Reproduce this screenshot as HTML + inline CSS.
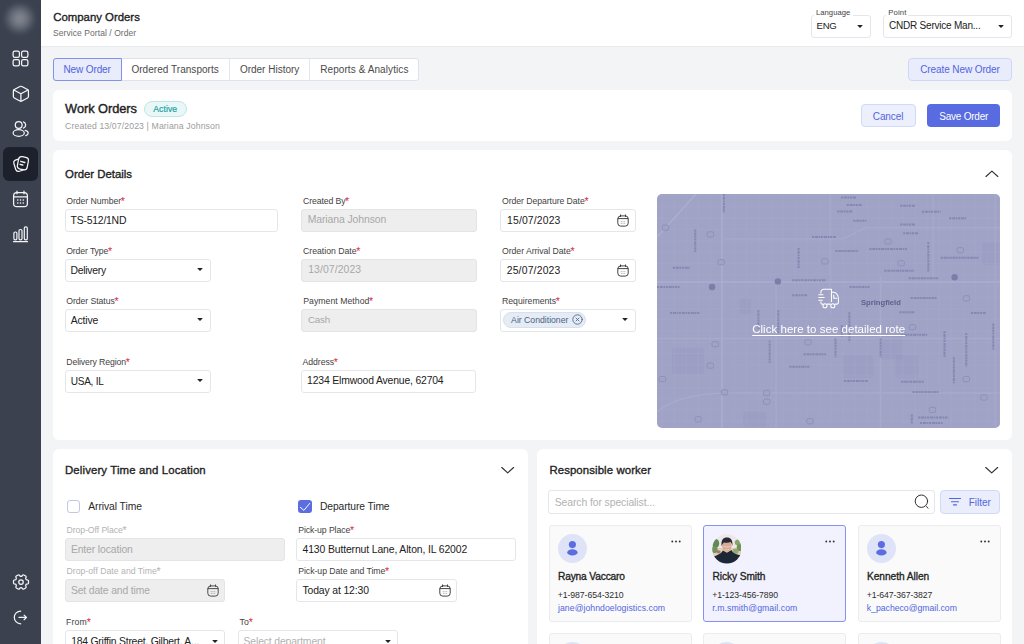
<!DOCTYPE html>
<html lang="en">
<head>
<meta charset="utf-8">
<title>Company Orders</title>
<style>
*{box-sizing:border-box;margin:0;padding:0}
html,body{width:1024px;height:644px;overflow:hidden;background:#f3f4f6;font-family:"Liberation Sans",sans-serif;color:#212121}
.abs,.t,.inp,.card{position:absolute}
.t{white-space:nowrap;line-height:1}
#side{position:absolute;left:0;top:0;width:41px;height:644px;background:#3b414e}
#side svg{position:absolute;overflow:visible}
#top{position:absolute;left:41px;top:0;width:983px;height:46px;background:#fff;box-shadow:0 0 1.5px rgba(60,70,110,.18)}
.card{background:#fff;border-radius:6px}
.inp{height:23px;border:1px solid #e5e6ea;border-radius:3px;background:#fff;font-size:10.4px;line-height:21px;padding-left:5.5px;white-space:nowrap;color:#1f1f1f;overflow:hidden}
.caret{position:absolute;width:0;height:0;border-left:3.3px solid transparent;border-right:3.3px solid transparent;border-top:3.7px solid #222;border-radius:1px}
</style>
</head>
<body>
<div id="side">
<div class="abs" style="left:0px;top:0px;width:40px;height:40px;background:radial-gradient(circle at 19.6px 18.6px,#7f848f 0,#787d88 4px,#686d79 8px,#555b68 11.5px,#464c5a 14.5px,#3e4451 17px,#3b414e 19.5px)"></div>
<div class="abs" style="left:3px;top:146.5px;width:35px;height:34px;border-radius:6px;background:#1d212b"></div>
<svg style="left:12.2px;top:50.2px" width="17" height="17" viewBox="0 0 17 17" fill="none" stroke="#f4f5f7" stroke-width="1.25"><rect x="1.1" y="1.1" width="6.3" height="6.3" rx="1.7"/><rect x="9.6" y="1.1" width="6.3" height="6.3" rx="1.7"/><rect x="1.1" y="9.6" width="6.3" height="6.3" rx="1.7"/><rect x="9.6" y="9.6" width="6.3" height="6.3" rx="1.7"/></svg>
<svg style="left:11.8px;top:85.3px" width="17.8" height="17.3" viewBox="0 0 17 18" preserveAspectRatio="none" fill="none" stroke="#f4f5f7" stroke-width="1.2" stroke-linejoin="round" stroke-linecap="round"><path d="M7.6 1.6 2.2 4.7a1.8 1.8 0 0 0-.9 1.5v5.800000000000001a1.8 1.8 0 0 0 .9 1.5l5.4 3.1a1.8 1.8 0 0 0 1.8 0l5.4-3.1a1.8 1.8 0 0 0 .9-1.5V6.2a1.8 1.8 0 0 0-.9-1.5L9.4 1.6a1.8 1.8 0 0 0-1.8 0Z"/><path d="M1.7 5.3 8.5 9.2l6.8-3.9M8.5 9.2v7.6"/></svg>
<svg style="left:12px;top:119.5px" width="18" height="18" viewBox="0 0 18 18" fill="none" stroke="#f4f5f7" stroke-width="1.25" stroke-linecap="round"><circle cx="6.7" cy="5" r="3.4"/><ellipse cx="6.7" cy="13" rx="5.6" ry="3.3"/><path d="M11.5 1.9a3.3 3.3 0 0 1 0 6.2M13.2 10.3c1.8.4 3 1.400000000000001 3 2.7s-1 2.200000000000001-2.400000000000001 2.700000000000001"/></svg>
<svg style="left:12px;top:155px" width="18" height="18" viewBox="0 0 18 18" fill="none" stroke="#f4f5f7" stroke-width="1.25" stroke-linecap="round" stroke-linejoin="round"><rect x="-4.7" y="-5.9" width="9.4" height="11.8" rx="3" transform="translate(7.3 10.1) rotate(-17)"/><rect x="-5" y="-6.3" width="10" height="12.6" rx="3.3" transform="translate(10.9 8.2) rotate(11)" fill="#1d212b"/><path d="M8.7 6.3l4.1 1.2M8.1 9.3l2.7.7" stroke-width="1.35"/></svg>
<svg style="left:12px;top:190px" width="17" height="18" viewBox="0 0 17 18" fill="none" stroke="#f4f5f7" stroke-width="1.25" stroke-linecap="round"><rect x="1.6" y="2.6" width="13.8" height="14" rx="3.2"/><path d="M1.8 6.8h13.4M5 1.2v2.6M12 1.2v2.6"/><g stroke-width="1.5"><path d="M5.7 10h.1M8.45 10h.1M11.2 10h.1M5.7 13h.1M8.45 13h.1M11.2 13h.1"/></g></svg>
<svg style="left:12px;top:225px" width="17" height="18" viewBox="0 0 17 18" fill="none" stroke="#f4f5f7" stroke-width="1.2" stroke-linecap="round"><rect x="1.9" y="7" width="3" height="7.8" rx="1.3"/><rect x="7" y="4.5" width="3" height="10.3" rx="1.3"/><rect x="12.3" y="1.9" width="3" height="12.9" rx="1.3"/><path d="M1.5 16.7h14"/></svg>
<svg style="left:10.7px;top:572.3px" width="20" height="20" viewBox="0 0 24 24" fill="none" stroke="#f4f5f7" stroke-width="1.5" stroke-linejoin="round"><g transform="rotate(90 12 12)"><path d="M9.594 3.94c.09-.542.56-.94 1.11-.94h2.593c.55 0 1.02.398 1.11.94l.213 1.281c.063.374.313.686.645.87.074.04.147.083.22.127.324.196.72.257 1.075.124l1.217-.456a1.125 1.125 0 0 1 1.37.49l1.296 2.247a1.125 1.125 0 0 1-.26 1.431l-1.003.827c-.293.24-.438.613-.431.992a6.759 6.759 0 0 1 0 .255c-.007.378.138.75.43.99l1.005.828c.424.35.534.954.26 1.43l-1.298 2.247a1.125 1.125 0 0 1-1.369.491l-1.217-.456c-.355-.133-.75-.072-1.076.124a6.57 6.57 0 0 1-.22.128c-.331.183-.581.495-.644.869l-.213 1.28c-.09.543-.56.941-1.11.941h-2.594c-.55 0-1.02-.398-1.11-.94l-.213-1.281c-.062-.374-.312-.686-.644-.87a6.52 6.52 0 0 1-.22-.127c-.325-.196-.72-.257-1.076-.124l-1.217.456a1.125 1.125 0 0 1-1.369-.49l-1.297-2.247a1.125 1.125 0 0 1 .26-1.431l1.004-.827c.292-.24.437-.613.43-.992a6.932 6.932 0 0 1 0-.255c.007-.378-.138-.75-.43-.99l-1.004-.828a1.125 1.125 0 0 1-.26-1.43l1.297-2.247a1.125 1.125 0 0 1 1.37-.491l1.216.456c.356.133.751.072 1.076-.124.072-.044.146-.087.22-.128.332-.183.582-.495.644-.869l.214-1.281z"/></g><circle cx="12" cy="12" r="2.7"/></svg>
<svg style="left:12px;top:609px" width="17" height="17" viewBox="0 0 17 17" fill="none" stroke="#f4f5f7" stroke-width="1.25" stroke-linecap="round" stroke-linejoin="round"><path d="M8.7 2a6.4 6.4 0 1 0 0 12.8"/><path d="M7 8.4h7.4M12.1 6.1l2.4 2.3-2.4 2.3"/></svg>
</div>
<div id="top"></div>
<span class="t" style="left:53.28px;top:7px;font-size:11.4px;line-height:20px;letter-spacing:-0.013px;-webkit-text-stroke:0.36px #1f1f1f;color:#1f1f1f;">Company Orders</span>
<span class="t" style="left:53.00px;top:23px;font-size:8.5px;line-height:20px;letter-spacing:0.070px;color:#6b6b6b;">Service Portal / Order</span>
<div class="inp" style="left:810.5px;top:14.5px;width:60.00px;height:23.00px;"></div>
<div class="abs" style="left:814px;top:12px;width:38.5px;height:5px;background:#fff"></div>
<span class="t" style="left:815.90px;top:3px;font-size:7.7px;line-height:20px;letter-spacing:0.034px;color:#444;">Language</span>
<span class="t" style="left:816.60px;top:16px;font-size:9.6px;line-height:20px;letter-spacing:-0.292px;">ENG</span>
<i class="caret" style="left:857.3px;top:24.6px;border-top-color:#222"></i>
<div class="inp" style="left:882.7px;top:14.5px;width:129.10px;height:23.00px;"></div>
<div class="abs" style="left:886px;top:12px;width:22px;height:5px;background:#fff"></div>
<span class="t" style="left:888.30px;top:3px;font-size:7.7px;line-height:20px;letter-spacing:0.111px;color:#444;">Point</span>
<span class="t" style="left:889.00px;top:16px;font-size:10px;line-height:20px;letter-spacing:-0.217px;">CNDR Service Man...</span>
<i class="caret" style="left:998.4px;top:24.6px;border-top-color:#222"></i>
<div class="abs" style="left:53px;top:58px;width:365.50px;height:23.20px;background:#fff;border:1px solid #dfe1ee;border-radius:3px"></div>
<div class="abs" style="left:229px;top:58.5px;width:1.00px;height:22.20px;background:#e3e5f0"></div>
<div class="abs" style="left:309px;top:58.5px;width:1.00px;height:22.20px;background:#e3e5f0"></div>
<div class="abs" style="left:53px;top:58px;width:68.70px;height:23.20px;background:#e9ecfb;border:1px solid #8391ea;border-radius:3px 0 0 3px"></div>
<span class="t" style="left:63.40px;top:60px;font-size:10px;line-height:20px;letter-spacing:-0.106px;color:#4f62dc;">New Order</span>
<span class="t" style="left:131.40px;top:60px;font-size:10px;line-height:20px;letter-spacing:0.041px;color:#4a4a4a;">Ordered Transports</span>
<span class="t" style="left:239.90px;top:60px;font-size:10px;line-height:20px;color:#4a4a4a;">Order History</span>
<span class="t" style="left:320.20px;top:60px;font-size:10px;line-height:20px;letter-spacing:0.083px;color:#4a4a4a;">Reports &amp; Analytics</span>
<div class="abs" style="left:908.3px;top:58px;width:103.70px;height:23.20px;background:#e9ecfb;border:1px solid #d0d6f7;border-radius:4px"></div>
<span class="t" style="left:920.20px;top:60px;font-size:10px;line-height:20px;letter-spacing:-0.097px;color:#5265df;">Create New Order</span>
<div class="card" style="left:53px;top:90.2px;width:959.00px;height:50.80px;"></div>
<span class="t" style="left:65.11px;top:99px;font-size:12.8px;line-height:20px;letter-spacing:-0.043px;-webkit-text-stroke:0.41px #1f1f1f;color:#1f1f1f;">Work Orders</span>
<div class="abs" style="left:144.3px;top:101.3px;width:42.40px;height:15.50px;background:#e9f7f7;border:1px solid #bfe6e6;border-radius:8px"></div>
<span class="t" style="left:153.20px;top:99px;font-size:8.6px;line-height:20px;letter-spacing:0.093px;color:#19a3a3;-webkit-text-stroke:.2px #19a3a3;">Active</span>
<span class="t" style="left:65.10px;top:116px;font-size:8.7px;line-height:20px;letter-spacing:0.121px;color:#9c9c9c;">Created 13/07/2023 | Mariana Johnson</span>
<div class="abs" style="left:861px;top:104.3px;width:54.70px;height:23.10px;background:#eceffc;border:1px solid #d2d8f8;border-radius:4px"></div>
<span class="t" style="left:872.80px;top:107px;font-size:10px;line-height:20px;letter-spacing:-0.110px;color:#5265df;">Cancel</span>
<div class="abs" style="left:927.3px;top:104.3px;width:73.00px;height:23.10px;background:#586be0;border-radius:4px"></div>
<span class="t" style="left:939.20px;top:107px;font-size:10px;line-height:20px;letter-spacing:-0.217px;color:#ffffff;">Save Order</span>
<div class="card" style="left:53px;top:150px;width:959.00px;height:290.00px;"></div>
<span class="t" style="left:65.08px;top:164px;font-size:11.4px;line-height:20px;letter-spacing:-0.009px;-webkit-text-stroke:0.36px #1f1f1f;color:#1f1f1f;">Order Details</span>
<svg class="abs" style="left:984.5px;top:168.5px" width="14" height="9" viewBox="0 0 14 9" fill="none" stroke="#2e3138" stroke-width="1.15" stroke-linecap="round" stroke-linejoin="round"><path d="M1 7.5l5.9-5.4 5.9 5.4"/></svg>
<span class="t" style="left:66.20px;top:191.00px;font-size:8.7px;line-height:20px;letter-spacing:-0.049px;color:#424242">Order Number<span style="color:#e3263e;font-size:1.22em;line-height:0;position:relative;top:.12em;margin-left:-.03em">*</span></span>
<div class="inp" style="left:64.5px;top:208.5px;width:213.30px;height:23.00px;"></div>
<span class="t" style="left:70.60px;top:211px;font-size:10.4px;line-height:20px;letter-spacing:-0.214px;">TS-512/1ND</span>
<span class="t" style="left:66.20px;top:241.00px;font-size:8.7px;line-height:20px;letter-spacing:-0.126px;color:#424242">Order Type<span style="color:#e3263e;font-size:1.22em;line-height:0;position:relative;top:.12em;margin-left:-.03em">*</span></span>
<div class="inp" style="left:64.5px;top:258.5px;width:146.00px;height:23.00px;"></div>
<span class="t" style="left:70.60px;top:261px;font-size:10.4px;line-height:20px;letter-spacing:-0.292px;">Delivery</span>
<i class="caret" style="left:197.2px;top:268.1px;border-top-color:#222"></i>
<span class="t" style="left:66.25px;top:291.00px;font-size:8.7px;line-height:20px;letter-spacing:-0.064px;color:#424242">Order Status<span style="color:#e3263e;font-size:1.22em;line-height:0;position:relative;top:.12em;margin-left:-.03em">*</span></span>
<div class="inp" style="left:64.5px;top:308.5px;width:146.00px;height:23.00px;"></div>
<span class="t" style="left:70.70px;top:311px;font-size:10.4px;line-height:20px;letter-spacing:-0.148px;">Active</span>
<i class="caret" style="left:197.2px;top:318.1px;border-top-color:#222"></i>
<span class="t" style="left:66.25px;top:352.00px;font-size:8.7px;line-height:20px;letter-spacing:-0.104px;color:#424242">Delivery Region<span style="color:#e3263e;font-size:1.22em;line-height:0;position:relative;top:.12em;margin-left:-.03em">*</span></span>
<div class="inp" style="left:64.5px;top:369.6px;width:146.00px;height:23.00px;"></div>
<span class="t" style="left:70.70px;top:372px;font-size:10.1px;line-height:20px;letter-spacing:-0.282px;">USA, IL</span>
<i class="caret" style="left:197.2px;top:379.2px;border-top-color:#222"></i>
<span class="t" style="left:303.00px;top:191.00px;font-size:8.7px;line-height:20px;letter-spacing:-0.109px;color:#424242">Created By<span style="color:#e3263e;font-size:1.22em;line-height:0;position:relative;top:.12em;margin-left:-.03em">*</span></span>
<div class="inp" style="left:301.3px;top:208.5px;width:175.70px;height:23.00px;background:#eeeeee;border-color:#e4e4e4;"></div>
<span class="t" style="left:307.70px;top:210px;font-size:10.4px;line-height:20px;letter-spacing:-0.083px;color:#a8a8a8;">Mariana Johnson</span>
<span class="t" style="left:303.00px;top:241.00px;font-size:8.7px;line-height:20px;letter-spacing:-0.006px;color:#424242">Creation Date<span style="color:#e3263e;font-size:1.22em;line-height:0;position:relative;top:.12em;margin-left:-.03em">*</span></span>
<div class="inp" style="left:301.3px;top:258.5px;width:175.70px;height:23.00px;background:#eeeeee;border-color:#e4e4e4;"></div>
<span class="t" style="left:308.20px;top:260px;font-size:10.4px;line-height:20px;letter-spacing:0.105px;color:#a8a8a8;">13/07/2023</span>
<span class="t" style="left:303.20px;top:291.00px;font-size:8.7px;line-height:20px;letter-spacing:0.038px;color:#424242">Payment Method<span style="color:#e3263e;font-size:1.22em;line-height:0;position:relative;top:.12em;margin-left:-.03em">*</span></span>
<div class="inp" style="left:301.3px;top:308.5px;width:175.70px;height:23.00px;background:#eeeeee;border-color:#e4e4e4;"></div>
<span class="t" style="left:307.90px;top:310px;font-size:9.9px;line-height:20px;letter-spacing:-0.272px;color:#a8a8a8;">Cash</span>
<span class="t" style="left:302.40px;top:352.00px;font-size:8.7px;line-height:20px;letter-spacing:-0.017px;color:#424242">Address<span style="color:#e3263e;font-size:1.22em;line-height:0;position:relative;top:.12em;margin-left:-.03em">*</span></span>
<div class="inp" style="left:300.5px;top:369.6px;width:175.30px;height:23.00px;"></div>
<span class="t" style="left:307.10px;top:371px;font-size:10.4px;line-height:20px;letter-spacing:-0.169px;">1234 Elmwood Avenue, 62704</span>
<span class="t" style="left:502.00px;top:191.00px;font-size:8.7px;line-height:20px;letter-spacing:-0.066px;color:#424242">Order Departure Date<span style="color:#e3263e;font-size:1.22em;line-height:0;position:relative;top:.12em;margin-left:-.03em">*</span></span>
<div class="inp" style="left:500.4px;top:208.5px;width:135.20px;height:23.00px;"></div>
<span class="t" style="left:507.10px;top:211px;font-size:10.4px;line-height:20px;letter-spacing:0.139px;">15/07/2023</span>
<svg class="abs" style="left:617.3px;top:213.6px" width="12" height="13" viewBox="0 0 12 13" fill="none" stroke="#3a3a3a" stroke-width=".95" stroke-linecap="round"><rect x=".8" y="1.9" width="10.4" height="10.2" rx="2.9"/><path d="M1 4.6h10M3.5 .9v1.5M8.5 .9v1.5"/><path stroke-width=".8" d="M4.2 7.6h.1M5.95 7.6h.1M7.7 7.6h.1M4.2 9.4h.1M5.95 9.4h.1M7.7 9.4h.1" opacity=".55"/></svg>
<span class="t" style="left:502.00px;top:241.00px;font-size:8.7px;line-height:20px;letter-spacing:-0.044px;color:#424242">Order Arrival Date<span style="color:#e3263e;font-size:1.22em;line-height:0;position:relative;top:.12em;margin-left:-.03em">*</span></span>
<div class="inp" style="left:500.4px;top:258.5px;width:135.20px;height:23.00px;"></div>
<span class="t" style="left:506.70px;top:261px;font-size:10.4px;line-height:20px;letter-spacing:0.183px;">25/07/2023</span>
<svg class="abs" style="left:617.3px;top:263.6px" width="12" height="13" viewBox="0 0 12 13" fill="none" stroke="#3a3a3a" stroke-width=".95" stroke-linecap="round"><rect x=".8" y="1.9" width="10.4" height="10.2" rx="2.9"/><path d="M1 4.6h10M3.5 .9v1.5M8.5 .9v1.5"/><path stroke-width=".8" d="M4.2 7.6h.1M5.95 7.6h.1M7.7 7.6h.1M4.2 9.4h.1M5.95 9.4h.1M7.7 9.4h.1" opacity=".55"/></svg>
<span class="t" style="left:502.00px;top:291.00px;font-size:8.7px;line-height:20px;letter-spacing:-0.004px;color:#424242">Requirements<span style="color:#e3263e;font-size:1.22em;line-height:0;position:relative;top:.12em;margin-left:-.03em">*</span></span>
<div class="inp" style="left:500.4px;top:308.5px;width:135.20px;height:23.00px;"></div>
<i class="caret" style="left:622.1px;top:318.1px;border-top-color:#222"></i>
<div class="abs" style="left:503px;top:311.5px;width:83.00px;height:16.50px;background:#e5ecf5;border:1px solid #d6e0ee;border-radius:8.5px"></div>
<span class="t" style="left:511.10px;top:310px;font-size:8.7px;line-height:20px;letter-spacing:-0.011px;color:#4a6283;">Air Conditioner</span>
<svg class="abs" style="left:572.3px;top:314.2px" width="11" height="11" viewBox="0 0 11 11" fill="none" stroke="#4a6283" stroke-width=".85" stroke-linecap="round"><circle cx="5.5" cy="5.5" r="4.7"/><path d="M4 4l3 3M7 4L4 7"/></svg>
<svg class="abs" style="left:657px;top:194px;border-radius:5px" width="343.0" height="234.0" viewBox="0 0 343.0 234.0"><defs><filter id="mb" x="-5%" y="-5%" width="110%" height="110%"><feGaussianBlur stdDeviation="0.65"/></filter></defs><rect width="343.0" height="234.0" fill="#a0a3c6"/><g filter="url(#mb)"><rect x="14.9" y="153.9" width="32.0" height="26.3" rx="3" fill="#979abf" opacity=".5"/><rect x="86.3" y="217.8" width="22.6" height="15.0" rx="3" fill="#979abf" opacity=".5"/><rect x="223.6" y="138.9" width="22.6" height="26.3" rx="3" fill="#979abf" opacity=".5"/><rect x="325.1" y="48.6" width="18.8" height="22.6" rx="3" fill="#979abf" opacity=".5"/><rect x="82.6" y="105.0" width="11.3" height="15.0" rx="3" fill="#979abf" opacity=".5"/><rect x="186.0" y="161.4" width="30.1" height="22.6" rx="3" fill="#979abf" opacity=".5"/><rect x="238.6" y="161.4" width="22.6" height="22.6" rx="3" fill="#979abf" opacity=".5"/><path d="M5.5 0V234.0M17.5 0V234.0M29.6 0V234.0M41.6 0V234.0M53.6 0V234.0M65.7 0V234.0M77.7 0V234.0M89.7 0V234.0M101.8 0V234.0M113.8 0V234.0M125.8 0V234.0M137.8 0V234.0M149.9 0V234.0M161.9 0V234.0M173.9 0V234.0M186.0 0V234.0M198.0 0V234.0M210.0 0V234.0M222.1 0V234.0M234.1 0V234.0M246.1 0V234.0M258.2 0V234.0M270.2 0V234.0M282.2 0V234.0M294.2 0V234.0M306.3 0V234.0M318.3 0V234.0M330.3 0V234.0M342.4 0V234.0M0 1.6H343.0M0 12.9H343.0M0 24.2H343.0M0 35.5H343.0M0 46.8H343.0M0 58.0H343.0M0 69.3H343.0M0 80.6H343.0M0 91.9H343.0M0 103.1H343.0M0 114.4H343.0M0 125.7H343.0M0 137.0H343.0M0 148.3H343.0M0 159.5H343.0M0 170.8H343.0M0 182.1H343.0M0 193.4H343.0M0 204.6H343.0M0 215.9H343.0M0 227.2H343.0" stroke="#a6a9ca" stroke-width=".6" fill="none" opacity=".8"/><path d="M64.9 0V234.0M0 88.1H343.0M0 43.0L39.4 -0.2" stroke="#abaecf" stroke-width="1.5" fill="none"/><path d="M173.2 0V120.1M64.9 44.9H186.0L208.5 33.6H343.0M0 217.8Q20.6 200.9 64.9 199.0H343.0M119.1 88.1V234.0M223.6 82.5V234.0M338.2 0V234.0M0 144.5H343.0M276.2 0V90.0" stroke="#a7aacb" stroke-width="1.3" fill="none"/><path d="M184.1 3.5h15.0M189.7 11.0h15.0M180.3 17.4h15.0M243.1 11.8h15.0M264.9 17.8h18.8M196.3 26.8h13.2M292.2 24.2h16.9M243.1 30.6h15.0M246.1 39.2h15.0M155.0 43.0h24.4M212.3 55.0h37.6M178.5 56.9h22.6M283.7 63.7h37.6M15.9 73.8h16.9M227.3 76.8h30.1M251.8 84.3h30.1M135.2 86.2h33.8M-0.1 93.0h22.6M192.5 93.0h20.7M135.2 101.3h15.0M253.6 103.9h26.3M13.0 118.9h30.1M242.4 118.2h15.0M313.8 118.9h15.0M244.2 140.7h26.3M146.5 160.3h22.6M132.4 172.7h20.7M186.9 187.0h24.4M244.2 187.7h22.6M255.5 197.9h26.3M261.2 223.4h30.1M263.0 229.1h22.6M66.8 -0.2v18.8M38.2 35.5v22.6M141.6 54.1v20.7M271.3 47.9v30.1M101.4 116.3v18.8M121.3 116.3v22.6M192.4 118.2v30.1M184.8 131.3v11.3M223.6 144.5v18.8M287.5 137.0v26.3M309.3 138.9v33.8M296.9 163.3v26.3M336.3 129.5v26.3M112.7 146.4v22.6M178.5 144.5v18.8M254.8 220.6v9.4" stroke="#7d80ab" stroke-width="2" stroke-dasharray="2.2 .8 3 .6 1.6 .7" fill="none" opacity=".78"/><rect x="50.1" y="37.8" width="6.4" height="5.2" rx="1.6" fill="#a0a3c6" stroke="#8b8eb6" stroke-width=".9"/><rect x="61.0" y="65.6" width="6.4" height="5.2" rx="1.6" fill="#a0a3c6" stroke="#8b8eb6" stroke-width=".9"/><rect x="164.7" y="64.8" width="6.4" height="5.2" rx="1.6" fill="#a0a3c6" stroke="#8b8eb6" stroke-width=".9"/><rect x="227.9" y="44.9" width="6.4" height="5.2" rx="1.6" fill="#a0a3c6" stroke="#8b8eb6" stroke-width=".9"/><rect x="241.0" y="66.7" width="6.4" height="5.2" rx="1.6" fill="#a0a3c6" stroke="#8b8eb6" stroke-width=".9"/><rect x="306.1" y="101.7" width="6.4" height="5.2" rx="1.6" fill="#a0a3c6" stroke="#8b8eb6" stroke-width=".9"/><rect x="300.1" y="53.6" width="6.4" height="5.2" rx="1.6" fill="#a0a3c6" stroke="#8b8eb6" stroke-width=".9"/><rect x="55.0" y="147.5" width="6.4" height="5.2" rx="1.6" fill="#a0a3c6" stroke="#8b8eb6" stroke-width=".9"/><rect x="50.1" y="169.0" width="6.4" height="5.2" rx="1.6" fill="#a0a3c6" stroke="#8b8eb6" stroke-width=".9"/><rect x="2.3" y="182.5" width="6.4" height="5.2" rx="1.6" fill="#a0a3c6" stroke="#8b8eb6" stroke-width=".9"/><rect x="64.3" y="195.7" width="6.4" height="5.2" rx="1.6" fill="#a0a3c6" stroke="#8b8eb6" stroke-width=".9"/><rect x="106.5" y="196.4" width="6.4" height="5.2" rx="1.6" fill="#a0a3c6" stroke="#8b8eb6" stroke-width=".9"/><rect x="106.5" y="205.1" width="6.4" height="5.2" rx="1.6" fill="#a0a3c6" stroke="#8b8eb6" stroke-width=".9"/><rect x="38.0" y="222.7" width="6.4" height="5.2" rx="1.6" fill="#a0a3c6" stroke="#8b8eb6" stroke-width=".9"/><rect x="147.8" y="145.7" width="6.4" height="5.2" rx="1.6" fill="#a0a3c6" stroke="#8b8eb6" stroke-width=".9"/><rect x="149.7" y="224.6" width="6.4" height="5.2" rx="1.6" fill="#a0a3c6" stroke="#8b8eb6" stroke-width=".9"/><rect x="323.7" y="200.9" width="6.4" height="5.2" rx="1.6" fill="#a0a3c6" stroke="#8b8eb6" stroke-width=".9"/><rect x="306.1" y="182.5" width="6.4" height="5.2" rx="1.6" fill="#a0a3c6" stroke="#8b8eb6" stroke-width=".9"/><rect x="272.2" y="213.3" width="6.4" height="5.2" rx="1.6" fill="#a0a3c6" stroke="#8b8eb6" stroke-width=".9"/><rect x="252.3" y="130.6" width="6.4" height="5.2" rx="1.6" fill="#a0a3c6" stroke="#8b8eb6" stroke-width=".9"/><rect x="5.3" y="31.0" width="6.4" height="5.2" rx="1.6" fill="#a0a3c6" stroke="#8b8eb6" stroke-width=".9"/><circle cx="55.1" cy="93.0" r="3.2" fill="#7b7eaa"/><circle cx="120.9" cy="87.4" r="3.2" fill="#7b7eaa"/><circle cx="297.6" cy="83.2" r="3.2" fill="#7b7eaa"/></g><text x="204.0" y="110.6" font-family="Liberation Sans, sans-serif" font-size="8" font-weight="bold" fill="#5e618c" textLength="39.8" lengthAdjust="spacingAndGlyphs" filter="url(#mb)">Springfield</text><g transform="translate(160.6 94.0)" fill="none" stroke="#fff" stroke-width="1.05" stroke-linecap="round" stroke-linejoin="round"><path d="M3.3 5.1V4a2.8 2.8 0 0 1 2.8-2.8h7.800000000000001v12.4"/><path d="M13.9 4.3h2.1c2.7 0 4.800000000000001 3.2 4.800000000000001 6.4v3.8c0 1-.6 1.6-1.4 1.6h-1.6"/><path d="M16.2 6.9v3.3h2.9"/><path d="M12.700000000000001 16.1H9.9M5 16.1H4.600000000000001c-.8 0-1.3-.6-1.3-1.4v-.9"/><circle cx="7.4" cy="17.7" r="2.05"/><circle cx="15.2" cy="17.7" r="2.05"/><path d="M1.2 6.8h4.2M1.2 9.5h5.4M1.2 12.2h3.6"/></g></svg>
<span class="t" style="left:752.20px;top:319px;font-size:11.5px;line-height:20px;letter-spacing:0.028px;color:#ffffff;text-decoration:underline;text-decoration-thickness:.6px;text-underline-offset:1.5px;">Click here to see detailed rote</span>
<div class="card" style="left:53px;top:449.3px;width:475.00px;height:210.70px;"></div>
<span class="t" style="left:64.98px;top:460px;font-size:11.4px;line-height:20px;letter-spacing:0.134px;-webkit-text-stroke:0.36px #1f1f1f;color:#1f1f1f;">Delivery Time and Location</span>
<svg class="abs" style="left:500.7px;top:465.8px" width="14" height="9" viewBox="0 0 14 9" fill="none" stroke="#2e3138" stroke-width="1.15" stroke-linecap="round" stroke-linejoin="round"><path d="M.8 1.5l5.9 5.4 5.9-5.4"/></svg>
<div class="abs" style="left:66.5px;top:499.5px;width:13.50px;height:13.50px;border:1px solid #c3c7df;border-radius:3px;background:#fff"></div>
<span class="t" style="left:88.20px;top:497px;font-size:10.3px;line-height:20px;letter-spacing:-0.053px;color:#2a2a2a;">Arrival Time</span>
<div class="abs" style="left:298.2px;top:499.5px;width:13.60px;height:13.50px;border-radius:3px;background:#5b6de1"><svg width="13.6" height="13.5" viewBox="0 0 13.6 13.5" fill="none" stroke="#fff" stroke-width="1" stroke-linecap="round" stroke-linejoin="round" style="display:block"><path d="M2.3 7.3l3.6 3.1 5.8-7"/></svg></div>
<span class="t" style="left:320.00px;top:497px;font-size:10.3px;line-height:20px;letter-spacing:-0.105px;color:#2a2a2a;">Departure Time</span>
<span class="t" style="left:66.50px;top:520.00px;font-size:8.7px;line-height:20px;letter-spacing:-0.076px;color:#b3b3b3">Drop-Off Place<span style="color:#b3b3b3;font-size:1.22em;line-height:0;position:relative;top:.12em;margin-left:-.03em">*</span></span>
<div class="inp" style="left:64.5px;top:538px;width:220.30px;height:23.00px;background:#eeeeee;border-color:#e4e4e4;"></div>
<span class="t" style="left:70.90px;top:540px;font-size:10.4px;line-height:20px;letter-spacing:-0.123px;color:#a8a8a8;">Enter location</span>
<span class="t" style="left:66.50px;top:561.00px;font-size:8.7px;line-height:20px;letter-spacing:0.011px;color:#b3b3b3">Drop-off Date and Time<span style="color:#b3b3b3;font-size:1.22em;line-height:0;position:relative;top:.12em;margin-left:-.03em">*</span></span>
<div class="inp" style="left:64.5px;top:579px;width:160.70px;height:23.00px;background:#eeeeee;border-color:#e4e4e4;"></div>
<span class="t" style="left:70.90px;top:581px;font-size:10.4px;line-height:20px;letter-spacing:-0.146px;color:#a8a8a8;">Set date and time</span>
<svg class="abs" style="left:206.5px;top:584.0px" width="12" height="13" viewBox="0 0 12 13" fill="none" stroke="#444" stroke-width=".95" stroke-linecap="round"><rect x=".8" y="1.9" width="10.4" height="10.2" rx="2.9"/><path d="M1 4.6h10M3.5 .9v1.5M8.5 .9v1.5"/><path stroke-width=".8" d="M4.2 7.6h.1M5.95 7.6h.1M7.7 7.6h.1M4.2 9.4h.1M5.95 9.4h.1M7.7 9.4h.1" opacity=".55"/></svg>
<span class="t" style="left:66.10px;top:612.00px;font-size:8.7px;line-height:20px;letter-spacing:0.159px;color:#424242">From<span style="color:#e3263e;font-size:1.22em;line-height:0;position:relative;top:.12em;margin-left:-.03em">*</span></span>
<div class="inp" style="left:64.5px;top:630.4px;width:160.70px;height:23.00px;"></div>
<span class="t" style="left:71.20px;top:632px;font-size:10.4px;line-height:20px;letter-spacing:-0.233px;">184 Griffin Street, Gilbert, A...</span>
<i class="caret" style="left:212.2px;top:639.8px;border-top-color:#222"></i>
<span class="t" style="left:298.20px;top:520.00px;font-size:8.7px;line-height:20px;letter-spacing:-0.084px;color:#424242">Pick-up Place<span style="color:#e3263e;font-size:1.22em;line-height:0;position:relative;top:.12em;margin-left:-.03em">*</span></span>
<div class="inp" style="left:296.4px;top:538px;width:219.90px;height:23.00px;"></div>
<span class="t" style="left:302.50px;top:540px;font-size:10.4px;line-height:20px;letter-spacing:-0.119px;">4130 Butternut Lane, Alton, IL 62002</span>
<span class="t" style="left:298.20px;top:561.00px;font-size:8.7px;line-height:20px;letter-spacing:-0.033px;color:#424242">Pick-up Date and Time<span style="color:#e3263e;font-size:1.22em;line-height:0;position:relative;top:.12em;margin-left:-.03em">*</span></span>
<div class="inp" style="left:296.4px;top:579px;width:160.20px;height:23.00px;"></div>
<span class="t" style="left:302.50px;top:581px;font-size:10.4px;line-height:20px;letter-spacing:-0.133px;">Today at 12:30</span>
<svg class="abs" style="left:438.7px;top:584.0px" width="12" height="13" viewBox="0 0 12 13" fill="none" stroke="#3a3a3a" stroke-width=".95" stroke-linecap="round"><rect x=".8" y="1.9" width="10.4" height="10.2" rx="2.9"/><path d="M1 4.6h10M3.5 .9v1.5M8.5 .9v1.5"/><path stroke-width=".8" d="M4.2 7.6h.1M5.95 7.6h.1M7.7 7.6h.1M4.2 9.4h.1M5.95 9.4h.1M7.7 9.4h.1" opacity=".55"/></svg>
<span class="t" style="left:239.40px;top:612.00px;font-size:8.7px;line-height:20px;letter-spacing:0.214px;color:#424242">To<span style="color:#e3263e;font-size:1.22em;line-height:0;position:relative;top:.12em;margin-left:-.03em">*</span></span>
<div class="inp" style="left:237.6px;top:630.4px;width:160.10px;height:23.00px;"></div>
<span class="t" style="left:243.60px;top:632px;font-size:10.4px;line-height:20px;letter-spacing:-0.150px;color:#b2b2b2;">Select department</span>
<i class="caret" style="left:384.7px;top:639.8px;border-top-color:#222"></i>
<div class="card" style="left:537px;top:449.3px;width:475.00px;height:210.70px;"></div>
<span class="t" style="left:549.38px;top:460px;font-size:11.4px;line-height:20px;letter-spacing:0.097px;-webkit-text-stroke:0.36px #1f1f1f;color:#1f1f1f;">Responsible worker</span>
<svg class="abs" style="left:984.7px;top:465.8px" width="14" height="9" viewBox="0 0 14 9" fill="none" stroke="#2e3138" stroke-width="1.15" stroke-linecap="round" stroke-linejoin="round"><path d="M.8 1.5l5.9 5.4 5.9-5.4"/></svg>
<div class="inp" style="left:548.4px;top:490px;width:386.30px;height:23.50px;"></div>
<span class="t" style="left:554.70px;top:493px;font-size:10.4px;line-height:20px;letter-spacing:-0.084px;color:#b2b2b2;">Search for specialist...</span>
<svg class="abs" style="left:914px;top:494px" width="16" height="16" viewBox="0 0 16 16" fill="none" stroke="#2e2e2e" stroke-width="1" stroke-linecap="round"><circle cx="7.4" cy="7.2" r="6.2"/><path d="M12.6 12.6l1.3 1.6"/></svg>
<div class="abs" style="left:940.3px;top:490px;width:60.20px;height:23.50px;background:#eaedfc;border:1px solid #d2d8f8;border-radius:4px"></div>
<svg class="abs" style="left:948px;top:496px" width="14" height="11" viewBox="0 0 14 11" fill="none" stroke="#5265df" stroke-width="1.15" stroke-linecap="round"><path d="M1.5 2.5h11M3.5 5.7h7M5.5 8.9h3"/></svg>
<span class="t" style="left:968.70px;top:493px;font-size:10px;line-height:20px;color:#5265df;">Filter</span>
<div class="abs" style="left:548.5px;top:524.8px;width:143.00px;height:97.00px;background:#fafafa;border:1px solid #ececee;border-radius:3px"></div>
<div class="abs" style="left:557.5px;top:534.0px"><svg width="29" height="29" viewBox="0 0 29 29" style="display:block"><circle cx="14.5" cy="14.5" r="14.5" fill="#dfe3f8"/><circle cx="14.4" cy="10.6" r="3.55" fill="#5b6de1"/><ellipse cx="14.4" cy="18.4" rx="5.2" ry="3.1" fill="#5b6de1"/></svg></div>
<svg class="abs" style="left:670.5px;top:540.1px" width="10" height="3" viewBox="0 0 10 3" fill="#333"><circle cx="1.3" cy="1.5" r=".95"/><circle cx="5" cy="1.5" r=".95"/><circle cx="8.7" cy="1.5" r=".95"/></svg>
<span class="t" style="left:557.96px;top:567px;font-size:10.2px;line-height:20px;letter-spacing:-0.153px;-webkit-text-stroke:0.33px #1f1f1f;color:#1f1f1f;">Rayna Vaccaro</span>
<span class="t" style="left:557.80px;top:585px;font-size:8.7px;line-height:20px;letter-spacing:-0.078px;color:#2e2e2e;">+1-987-654-3210</span>
<span class="t" style="left:558.02px;top:598px;font-size:8.7px;line-height:20px;letter-spacing:0.047px;color:#5265df;">jane@johndoelogistics.com</span>
<div class="abs" style="left:703px;top:524.8px;width:143.00px;height:97.00px;background:#f1f2fd;border:1px solid #8692ec;border-radius:3px"></div>
<svg class="abs" style="left:711.6px;top:533.9px" width="29.8" height="29.8" viewBox="0 0 29.8 29.8"><defs><clipPath id="pc"><circle cx="14.9" cy="14.9" r="14.7"/></clipPath><filter id="pb" x="-10%" y="-10%" width="120%" height="120%"><feGaussianBlur stdDeviation=".75"/></filter></defs><g clip-path="url(#pc)"><rect width="29.8" height="29.8" fill="#eee6e8"/><g filter="url(#pb)"><rect x="-2" y="14" width="34" height="9" fill="#e3cdb9"/><ellipse cx="3.6" cy="9.5" rx="3.6" ry="4.6" fill="#5e8a55"/><ellipse cx="2.6" cy="15.6" rx="3" ry="3.4" fill="#6f9560"/><ellipse cx="6.5" cy="17.8" rx="2.2" ry="1.6" fill="#9a7f6a"/><ellipse cx="26.2" cy="8.4" rx="3.4" ry="3" fill="#86a56c"/><ellipse cx="27.3" cy="13.5" rx="2.6" ry="3.6" fill="#6f9459"/><ellipse cx="23.5" cy="17.2" rx="3" ry="2.6" fill="#93a877"/><path d="M-1 30V23.5c3-1 7-2.700000000000001 9.5-4.3 1.1-.7 1.800000000000001-1.800000000000001 2.400000000000001-2.800000000000001l4 2.400000000000001 4.6-2.900000000000001c.5 1.3 1.2 2.3 2.300000000000001 3 2.6 1.5 6 2.1 9 3V30z" fill="#1b2836"/><ellipse cx="14.9" cy="11.8" rx="4.7" ry="5.9" fill="#d9a991"/><path d="M9.6 12.2C8.8 6 11.3 3.5 14.9 3.5s6.3 2.5 5.4 8.4c-.4-2-1-3.100000000000001-1.900000000000001-3.8-1.700000000000001.9-4.5 1-6.500000000000001.3-1 .8-1.700000000000001 2-2.300000000000001 3.8z" fill="#262b36"/><path d="M11.6 12.300000000000001c1.3.9 5.200000000000001.9 6.6 0" stroke="#f4e6df" stroke-width="1.2" fill="none" opacity=".55"/><path d="M12.6 15.200000000000001c1.300000000000001 1 3.300000000000001 1 4.600000000000001 0" stroke="#f3e3dc" stroke-width=".9" fill="none" opacity=".6"/></g></g></svg>
<svg class="abs" style="left:825.0px;top:540.1px" width="10" height="3" viewBox="0 0 10 3" fill="#333"><circle cx="1.3" cy="1.5" r=".95"/><circle cx="5" cy="1.5" r=".95"/><circle cx="8.7" cy="1.5" r=".95"/></svg>
<span class="t" style="left:712.46px;top:567px;font-size:10.2px;line-height:20px;letter-spacing:-0.079px;-webkit-text-stroke:0.33px #1f1f1f;color:#1f1f1f;">Ricky Smith</span>
<span class="t" style="left:712.30px;top:585px;font-size:8.7px;line-height:20px;letter-spacing:-0.085px;color:#2e2e2e;">+1-123-456-7890</span>
<span class="t" style="left:712.30px;top:598px;font-size:8.7px;line-height:20px;letter-spacing:0.079px;color:#5265df;">r.m.smith@gmail.com</span>
<div class="abs" style="left:857.5px;top:524.8px;width:143.00px;height:97.00px;background:#fafafa;border:1px solid #ececee;border-radius:3px"></div>
<div class="abs" style="left:866.5px;top:534.0px"><svg width="29" height="29" viewBox="0 0 29 29" style="display:block"><circle cx="14.5" cy="14.5" r="14.5" fill="#dfe3f8"/><circle cx="14.4" cy="10.6" r="3.55" fill="#5b6de1"/><ellipse cx="14.4" cy="18.4" rx="5.2" ry="3.1" fill="#5b6de1"/></svg></div>
<svg class="abs" style="left:979.5px;top:540.1px" width="10" height="3" viewBox="0 0 10 3" fill="#333"><circle cx="1.3" cy="1.5" r=".95"/><circle cx="5" cy="1.5" r=".95"/><circle cx="8.7" cy="1.5" r=".95"/></svg>
<span class="t" style="left:866.96px;top:567px;font-size:10.2px;line-height:20px;letter-spacing:-0.047px;-webkit-text-stroke:0.33px #1f1f1f;color:#1f1f1f;">Kenneth Allen</span>
<span class="t" style="left:866.80px;top:585px;font-size:8.7px;line-height:20px;letter-spacing:-0.092px;color:#2e2e2e;">+1-647-367-3827</span>
<span class="t" style="left:866.80px;top:598px;font-size:8.7px;line-height:20px;letter-spacing:-0.020px;color:#5265df;">k_pacheco@gmail.com</span>
<div class="abs" style="left:548.5px;top:633.2px;width:143.00px;height:26.80px;background:#fafafa;border:1px solid #ececee;border-radius:3px"></div>
<div class="abs" style="left:557.5px;top:642.4px"><svg width="29" height="29" viewBox="0 0 29 29" style="display:block"><circle cx="14.5" cy="14.5" r="14.5" fill="#dfe3f8"/><circle cx="14.4" cy="10.6" r="3.55" fill="#5b6de1"/><ellipse cx="14.4" cy="18.4" rx="5.2" ry="3.1" fill="#5b6de1"/></svg></div>
<div class="abs" style="left:703px;top:633.2px;width:143.00px;height:26.80px;background:#fafafa;border:1px solid #ececee;border-radius:3px"></div>
<div class="abs" style="left:712px;top:642.4px"><svg width="29" height="29" viewBox="0 0 29 29" style="display:block"><circle cx="14.5" cy="14.5" r="14.5" fill="#dfe3f8"/><circle cx="14.4" cy="10.6" r="3.55" fill="#5b6de1"/><ellipse cx="14.4" cy="18.4" rx="5.2" ry="3.1" fill="#5b6de1"/></svg></div>
<div class="abs" style="left:857.5px;top:633.2px;width:143.00px;height:26.80px;background:#fafafa;border:1px solid #ececee;border-radius:3px"></div>
<div class="abs" style="left:866.5px;top:642.4px"><svg width="29" height="29" viewBox="0 0 29 29" style="display:block"><circle cx="14.5" cy="14.5" r="14.5" fill="#dfe3f8"/><circle cx="14.4" cy="10.6" r="3.55" fill="#5b6de1"/><ellipse cx="14.4" cy="18.4" rx="5.2" ry="3.1" fill="#5b6de1"/></svg></div>
</body>
</html>
